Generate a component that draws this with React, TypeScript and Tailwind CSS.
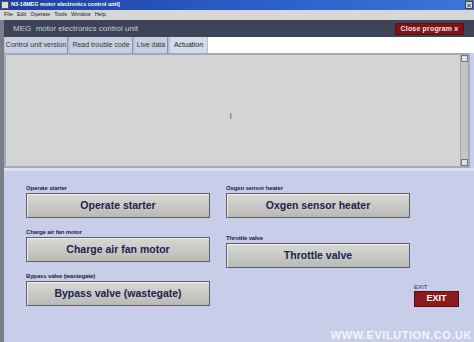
import { X } from 'lucide-react';

const FONT = { fontFamily: '"Liberation Sans", Arial, sans-serif' };

function ActButton({ label, caption }: { label: string; caption: string }) {
  return (
    <div className="flex flex-col w-[184px]">
      <span className="text-[6px] leading-[8px] text-[#1f2440] font-bold tracking-tight mb-[1px]">{caption}</span>
      <button className="h-[25px] w-full border border-[#5f6068] bg-gradient-to-b from-[#d8d8d4] to-[#b9b9b6] text-[10.5px] font-bold text-[#1e2350] shadow-[inset_1px_1px_0_#eeeeea]">
        {label}
      </button>
    </div>
  );
}

export default function App() {
  return (
    <div style={FONT} className="w-[474px] h-[342px] bg-[#c8cdea] flex flex-col overflow-hidden relative">
      {/* Title bar */}
      <div className="h-[10px] bg-gradient-to-r from-[#1d3f9c] via-[#2a5cc6] to-[#3a76d8] flex items-center px-[1px] shrink-0">
        <div className="w-[8px] h-[8px] bg-[#d9d9d9] border border-[#555] mr-[2px]" />
        <span className="text-[5.5px] leading-none font-bold text-white">N3-18MEG motor electronics control unit]</span>
        <div className="ml-auto w-[8px] h-[8px] bg-[#d6d6d6] border border-[#444] flex items-center justify-center">
          <X className="w-[7px] h-[7px] text-black" strokeWidth={3} />
        </div>
      </div>

      {/* Menu bar */}
      <div className="h-[10px] bg-[#d7d7d7] flex items-center gap-[4px] px-[4px] text-[5.5px] leading-none text-[#222] shrink-0">
        <span>File</span><span>Edit</span><span>Operate</span><span>Tools</span><span>Window</span><span>Help</span>
      </div>

      <div className="flex flex-1 min-h-0">
        {/* left window edge */}
        <div className="w-[4px] bg-[#7b7e86] shrink-0" />
        <div className="flex-1 flex flex-col min-w-0">
          {/* Header */}
          <div className="h-[17px] bg-[#3d4457] flex items-center pl-[9px] pr-[10px] shrink-0">
            <span className="text-[8px] text-[#c8ccd8]">MEG&nbsp;&nbsp;motor electronics control unit</span>
            <button className="ml-auto h-[12px] w-[69px] bg-[#7e1418] border border-[#5a0d10] text-[7px] font-bold text-[#f0e0e0] tracking-wide">
              Close program x
            </button>
          </div>

          {/* Tabs */}
          <div className="h-[16px] bg-white flex items-end shrink-0">
            <div className="flex h-full bg-[#b9c1d6] pl-[1px] gap-[2px] pr-[1px]">
              <div className="w-[63px] flex items-center justify-center text-[7px] text-[#333] bg-[#c8cfe0] border-r border-[#8a8f9c]">Control unit version</div>
              <div className="w-[63px] flex items-center justify-center text-[7px] text-[#333] bg-[#c8cfe0] border-r border-[#8a8f9c]">Read trouble code</div>
              <div className="w-[33px] flex items-center justify-center text-[7px] text-[#333] bg-[#c8cfe0] border-r border-[#8a8f9c]">Live data</div>
              <div className="w-[37px] flex items-center justify-center text-[7px] text-[#222] bg-[#d5dbe9]">Actuation</div>
            </div>
          </div>

          {/* Content panel */}
          <div className="h-[115px] border-[2px] border-[#9fa8c4] bg-[#d4d4d4] flex shrink-0 mr-[4px]">
            <div className="flex-1 flex items-center justify-end pr-[228px] pt-[12px] text-[9px] text-[#666]">I</div>
            <div className="w-[8px] bg-[#c4c4c4] border-l border-[#aaa] flex flex-col justify-between">
              <div className="h-[7px] bg-[#e0e0e0] border border-[#777]" />
              <div className="h-[7px] bg-[#e0e0e0] border border-[#777]" />
            </div>
          </div>

          {/* Actuation area */}
          <div className="flex-1 bg-[#c8cdea] border-t-[3px] border-[#dde0f2] pl-[22px] pt-[13px]">
            <div className="flex gap-[16px]">
              <div className="flex flex-col gap-[10px]">
                <ActButton caption="Operate starter" label="Operate starter" />
                <ActButton caption="Charge air fan motor" label="Charge air fan motor" />
                <ActButton caption="Bypass valve (wastegate)" label="Bypass valve (wastegate)" />
              </div>
              <div className="flex flex-col gap-[16px]">
                <ActButton caption="Oxgen sensor heater" label="Oxgen sensor heater" />
                <ActButton caption="Throttle valve" label="Throttle valve" />
                <div className="flex justify-end -mr-[49px] -mt-[1px]">
                  <div className="flex flex-col">
                    <span className="text-[6px] leading-[8px] text-[#333]">EXIT</span>
                    <button className="h-[16px] w-[45px] bg-[#8a1a1e] border border-[#5a0d10] text-[9px] font-bold text-white">EXIT</button>
                  </div>
                </div>
              </div>
            </div>
          </div>
        </div>
      </div>

      <span className="absolute right-[2px] bottom-[-1px] text-[11px] font-bold tracking-wider text-white/80">WWW.EVILUTION.CO.UK</span>
    </div>
  );
}
